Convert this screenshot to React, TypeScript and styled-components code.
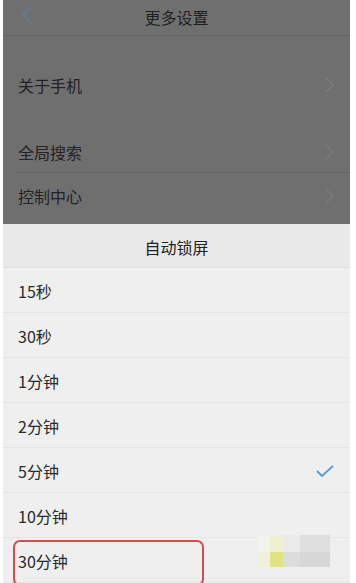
import React from 'react'
import styled, { createGlobalStyle } from 'styled-components'

const GlobalStyle = createGlobalStyle`
  html, body {
    margin: 0;
    padding: 0;
    background: #ffffff;
  }
  body {
    font-family: "Noto Sans CJK SC", "Noto Sans", sans-serif;
  }
`

const Page = styled.div({
  width: 356,
  height: 583,
  overflow: 'hidden',
  display: 'flex',
  paddingLeft: 3,
  boxSizing: 'border-box',
  background: '#ffffff',
})

const Screen = styled.div({
  width: 347,
  height: 583,
  display: 'flex',
  flexDirection: 'column',
})

// dimmed settings page behind the sheet
const Behind = styled.div({
  height: 227,
  background: '#6f6f6f',
  display: 'flex',
  flexDirection: 'column',
})

const NavBar = styled.div({
  height: 36,
  flexShrink: 0,
  display: 'flex',
  alignItems: 'center',
  justifyContent: 'center',
  position: 'relative',
  borderBottom: '1px solid #646464',
  boxSizing: 'border-box',
  paddingBottom: 2,
  fontSize: 16,
  color: '#1f1f1f',
})

const BackButton = styled.div({
  position: 'absolute',
  left: 17,
  top: 6,
  width: 14,
  height: 18,
  display: 'flex',
})

const Gap = styled.div<{ h: number }>(({ h }) => ({
  height: h,
  flexShrink: 0,
}))

const DimRow = styled.div<{ divider?: boolean }>(({ divider }) => ({
  height: 44,
  flexShrink: 0,
  display: 'flex',
  alignItems: 'center',
  justifyContent: 'space-between',
  paddingLeft: 15,
  paddingRight: 16,
  paddingTop: 1,
  fontSize: 16,
  color: '#232323',
  boxSizing: 'border-box',
  backgroundImage: divider
    ? 'linear-gradient(#656565, #656565)'
    : 'none',
  backgroundRepeat: 'no-repeat',
  backgroundSize: 'calc(100% - 13px) 1px',
  backgroundPosition: 'right bottom',
}))

const Sheet = styled.div({
  flex: 1,
  display: 'flex',
  flexDirection: 'column',
  background: '#efefef',
})

const SheetTitle = styled.div({
  height: 44,
  flexShrink: 0,
  display: 'flex',
  alignItems: 'center',
  justifyContent: 'center',
  background: '#e9e9e9',
  borderBottom: '1px solid #dedede',
  boxSizing: 'border-box',
  paddingTop: 2,
  fontSize: 16,
  color: '#222',
})

const Option = styled.div({
  height: 45,
  flexShrink: 0,
  display: 'flex',
  alignItems: 'center',
  justifyContent: 'space-between',
  paddingLeft: 15,
  paddingRight: 16,
  paddingTop: 2,
  fontSize: 16,
  color: '#2a2a2a',
  borderBottom: '1px solid #e4e4e4',
  boxSizing: 'border-box',
  position: 'relative',
})

const Highlight = styled.div({
  position: 'absolute',
  left: 10,
  top: 2,
  width: 191,
  height: 46,
  border: '2px solid #d94a4a',
  borderRadius: 7,
  boxSizing: 'border-box',
})

const Mosaic = styled.div({
  position: 'absolute',
  left: 254,
  top: -3,
  display: 'grid',
  gridTemplateColumns: '13px 13px 17px 30px',
  gridTemplateRows: '17px 15px',
})

const Tile = styled.div<{ c: string }>(({ c }) => ({
  background: c,
}))

const Chevron = () => (
  <svg width="9" height="16" viewBox="0 0 9 16">
    <path d="M1 1 L8 8 L1 15" fill="none" stroke="#7c7c7c" strokeWidth="1.3" />
  </svg>
)

const Check = () => (
  <svg width="18" height="12" viewBox="0 0 18 12">
    <path d="M1 6 L6 11 L17 1" fill="none" stroke="#4a9ed9" strokeWidth="1.8" />
  </svg>
)

const options = ['15秒', '30秒', '1分钟', '2分钟', '5分钟', '10分钟', '30分钟']

const App = () => (
  <>
    <GlobalStyle />
    <Page>
      <Screen>
        <Behind>
          <NavBar>
            <BackButton>
              <svg width="14" height="18" viewBox="0 0 14 18">
                <path d="M11 1 L3 9 L11 17" fill="none" stroke="#5a7ea6" strokeWidth="1.5" />
              </svg>
            </BackButton>
            更多设置
          </NavBar>
          <Gap h={26} />
          <DimRow>
            关于手机
            <Chevron />
          </DimRow>
          <Gap h={23} />
          <DimRow divider>
            全局搜索
            <Chevron />
          </DimRow>
          <DimRow>
            控制中心
            <Chevron />
          </DimRow>
        </Behind>
        <Sheet>
          <SheetTitle>自动锁屏</SheetTitle>
          {options.map((o) => (
            <Option key={o}>
              {o}
              {o === '5分钟' && <Check />}
              {o === '30分钟' && (
                <>
                  <Highlight />
                  <Mosaic>
                    <Tile c="#f3f3ee" />
                    <Tile c="#eef0d4" />
                    <Tile c="#eaeaea" />
                    <Tile c="#dedede" />
                    <Tile c="#eef0dc" />
                    <Tile c="#dfe57c" />
                    <Tile c="#dcdcdc" />
                    <Tile c="#d7d7d7" />
                  </Mosaic>
                </>
              )}
            </Option>
          ))}
        </Sheet>
      </Screen>
    </Page>
  </>
)

export default App
